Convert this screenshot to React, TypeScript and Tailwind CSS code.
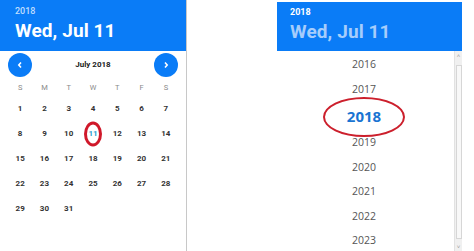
import React from "react";

const weekdays = ["S", "M", "T", "W", "T", "F", "S"];
const days: number[] = Array.from({ length: 31 }, (_, i) => i + 1);
const years = [2016, 2017, 2018, 2019, 2020, 2021, 2022, 2023];

function Calendar() {
  return (
    <div className="w-[187px] h-[251px] border-r border-[#c8c8c8] bg-white font-['Roboto',sans-serif]">
      <div className="h-[51px] bg-[#0a7cf7] pl-[15px] pt-[5px]">
        <div className="text-[9px] leading-[12px] text-white/75 font-medium">2018</div>
        <div className="text-[19px] leading-[27px] font-bold text-white tracking-[0.1px]">Wed, Jul 11</div>
      </div>
      <div className="flex items-center justify-between px-[8px] mt-[2px] h-[24px]">
        <button className="w-[24px] h-[24px] rounded-full bg-[#0a7cf7] flex items-center justify-center text-white">
          <svg width="8" height="8" viewBox="0 0 8 8">
            <path d="M5 1.5 L2.8 4 L5 6.5" stroke="white" strokeWidth="1.6" fill="none" />
          </svg>
        </button>
        <span className="text-[8px] font-bold text-[#222]">July 2018</span>
        <button className="w-[24px] h-[24px] rounded-full bg-[#0a7cf7] flex items-center justify-center text-white">
          <svg width="8" height="8" viewBox="0 0 8 8">
            <path d="M3 1.5 L5.2 4 L3 6.5" stroke="white" strokeWidth="1.6" fill="none" />
          </svg>
        </button>
      </div>
      <div className="mx-[8px] mt-[2px] grid grid-cols-7 h-[17px] items-center">
        {weekdays.map((d, i) => (
          <span key={i} className="text-center text-[7.5px] text-[#8a8a8a]">{d}</span>
        ))}
      </div>
      <div className="mx-[8px] grid grid-cols-7 auto-rows-[25px] items-center">
        {days.map((d) => (
          <span
            key={d}
            className={
              d === 11
                ? "relative text-center text-[8px] font-bold text-[#2a9fd0]"
                : "text-center text-[8px] font-bold text-[#333]"
            }
          >
            {d}
            {d === 11 && (
              <span className="absolute left-1/2 top-1/2 -translate-x-1/2 -translate-y-1/2 w-[18px] h-[25px] rounded-[50%] border-[3px] border-[#d0182a]" />
            )}
          </span>
        ))}
      </div>
    </div>
  );
}

function YearPicker() {
  return (
    <div className="w-[185px] h-[249px] mt-[2px] bg-white flex flex-col font-['Roboto',sans-serif]">
      <div className="h-[49px] bg-[#0a7cf7] pl-[13px] pt-[4px]">
        <div className="text-[9px] leading-[12px] text-white font-bold">2018</div>
        <div className="text-[19px] leading-[27px] font-bold text-[#a6cdfb] tracking-[0.1px]">Wed, Jul 11</div>
      </div>
      <div className="flex flex-1 overflow-hidden">
        <div className="flex-1 flex flex-col items-center pt-[2px] pr-[3px] font-['Open_Sans',sans-serif]">
          {years.map((y) =>
            y === 2018 ? (
              <div key={y} className="relative h-[29px] shrink-0 flex items-center justify-center">
                <span className="text-[15px] font-bold text-[#1a74d2]">{y}</span>
                <span className="absolute left-1/2 top-1/2 -translate-x-1/2 -translate-y-1/2 w-[82px] h-[40px] rounded-[50%] border-[2.5px] border-[#cc1f2c]" />
              </div>
            ) : (
              <div key={y} className="h-[24.5px] shrink-0 flex items-center justify-center text-[10.5px] text-[#555]">
                {y}
              </div>
            )
          )}
        </div>
        <div className="w-[8px] bg-[#f0f0f0] border-l border-[#e2e2e2] flex flex-col items-center">
          <span className="text-[6px] leading-[10px] text-[#999]">˄</span>
          <div className="w-[6px] flex-1 mt-[4px] mb-[4px] bg-[#f8f8f8] border border-[#d6d6d6]" />
          <span className="text-[6px] leading-[8px] text-[#999]">˅</span>
        </div>
      </div>
    </div>
  );
}

export default function App() {
  return (
    <div className="w-[474px] h-[251px] bg-white flex overflow-hidden">
      <Calendar />
      <div className="w-[90px]" />
      <YearPicker />
    </div>
  );
}
